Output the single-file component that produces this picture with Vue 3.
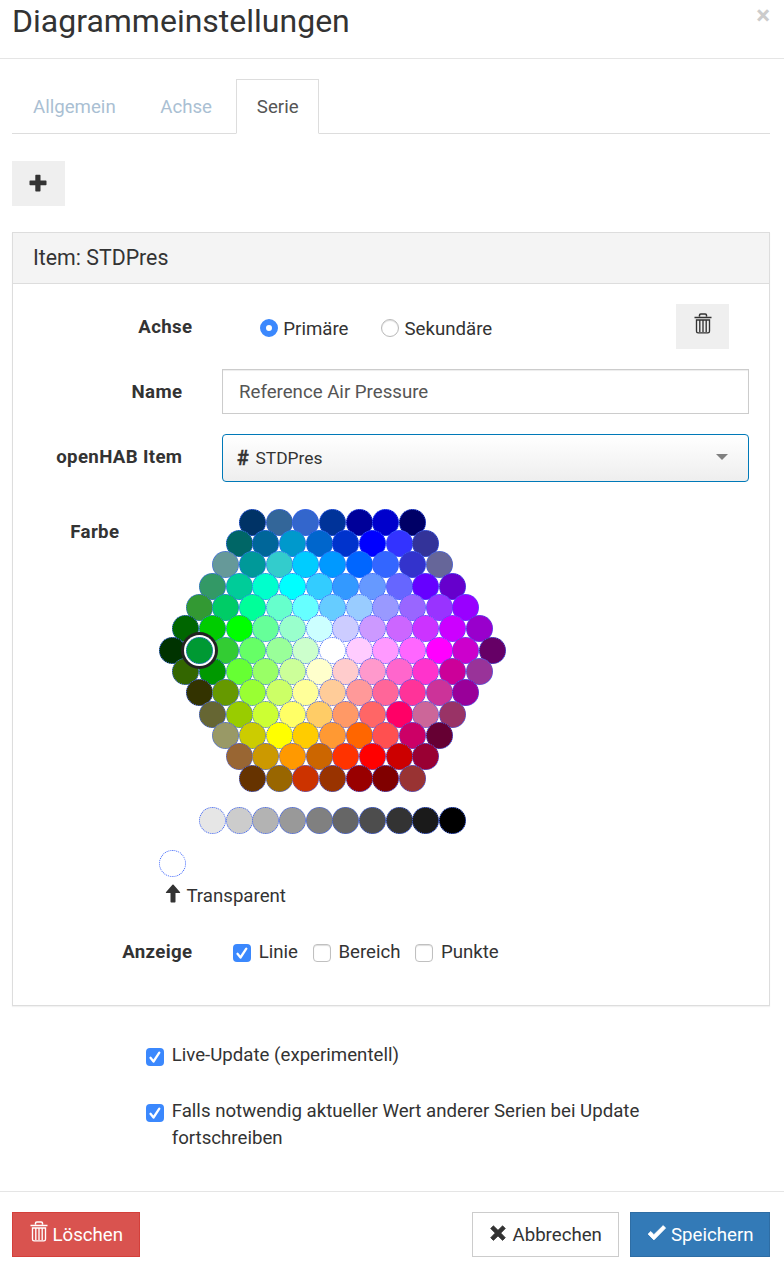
<script setup>
import { ref } from 'vue'

const hexRows = [
  '003366 336699 3366CC 003399 000099 0000CC 000066',
  '006666 006699 0099CC 0066CC 0033CC 0000FF 3333FF 333399',
  '669999 009999 33CCCC 00CCFF 0099FF 0066FF 3366FF 3333CC 666699',
  '339966 00CC99 00FFCC 00FFFF 33CCFF 3399FF 6699FF 6666FF 6600FF 6600CC',
  '339933 00CC66 00FF99 66FFCC 66FFFF 66CCFF 99CCFF 9999FF 9966FF 9933FF 9900FF',
  '006600 00CC00 00FF00 66FF99 99FFCC CCFFFF CCCCFF CC99FF CC66FF CC33FF CC00FF 9900CC',
  '003300 009933 33CC33 66FF66 99FF99 CCFFCC FFFFFF FFCCFF FF99FF FF66FF FF00FF CC00CC 660066',
  '336600 009900 66FF33 99FF66 CCFF99 FFFFCC FFCCCC FF99CC FF66CC FF33CC CC0099 993399',
  '333300 669900 99FF33 CCFF66 FFFF99 FFCC99 FF9999 FF6699 FF3399 CC3399 990099',
  '666633 99CC00 CCFF33 FFFF66 FFCC66 FF9966 FF6666 FF0066 CC6699 993366',
  '999966 CCCC00 FFFF00 FFCC00 FF9933 FF6600 FF5050 CC0066 660033',
  '996633 CC9900 FF9900 CC6600 FF3300 FF0000 CC0000 990033',
  '663300 996600 CC3300 993300 990000 800000 993333'
].map((r) => r.split(' ').map((c) => '#' + c))
const greys = ['e6', 'cc', 'b3', '99', '80', '66', '4d', '33', '1a', '00'].map((g) => '#' + g + g + g)
const selected = ref('#009933')
const displays = ref([
  { label: 'Linie', on: true },
  { label: 'Bereich', on: false },
  { label: 'Punkte', on: false }
])
</script>

<template>
  <div class="modal">
    <header class="head">
      <h1>Diagrammeinstellungen</h1>
      <span class="close">×</span>
    </header>

    <nav class="tabs">
      <a>Allgemein</a>
      <a>Achse</a>
      <a class="active">Serie</a>
    </nav>

    <button class="sq add">
      <svg width="18" height="18" viewBox="0 0 18 18"><path d="M7 .8h3.8q.7 0 .7.7v5h5.300q.7 0 .7.7v3.400q0 .7-.7.7h-5.300v5.500q0 .7-.7.7H7q-.7 0-.7-.7v-5.500H1.200q-.7 0-.7-.7V7.200q0-.7.7-.7h5.100v-5q0-.7.7-.7z" fill="#333" /></svg>
    </button>

    <section class="panel">
      <div class="panel-head">Item: STDPres</div>
      <div class="row axis">
        <b class="lbl wide">Achse</b>
        <span class="radio on"></span><span class="rtext">Primäre</span>
        <span class="radio second"></span><span class="rtext">Sekundäre</span>
        <button class="sq trash">
          <svg width="18" height="21" viewBox="0 0 18 21" fill="none" stroke="#333"><path d="M5.500 3.600V2.300Q5.500 1 6.800 1h4.400q1.300 0 1.300 1.300v1.300M.5 4.400h17" stroke-width="1.500" /><path d="M2.500 7h13v11.200q0 1.600-1.600 1.600H4.100q-1.600 0-1.600-1.600zM5.800 7v12M9 7v12M12.200 7v12" stroke-width="1.350" /></svg>
        </button>
      </div>
      <div class="row name">
        <b class="lbl">Name</b>
        <div class="input">Reference Air Pressure</div>
      </div>
      <div class="row item">
        <b class="lbl">openHAB Item</b>
        <div class="select"><b>#</b><span>STDPres</span><i class="caret"></i></div>
      </div>
      <div class="color">
        <b class="lbl">Farbe</b>
        <div class="picker">
          <div v-for="(r, i) in hexRows" :key="i" class="hexrow">
            <span v-for="c in r" :key="c" class="dot" :class="{ sel: c === selected }" :style="{ backgroundColor: c }"></span>
          </div>
          <div class="hexrow greys">
            <span v-for="c in greys" :key="c" class="dot" :style="{ backgroundColor: c }"></span>
          </div>
          <span class="dot clear"></span>
          <div class="transparent">
            <svg width="16" height="19" viewBox="0 0 16 19"><path d="M7.400.7q.6-.6 1.200 0l6.500 7.500q.4.800-.5.800H10.500v8.800q0 .7-.7.700H6.200q-.7 0-.7-.7V9H1.400Q.5 9 .9 8.200z" fill="#333" /></svg>
            <span>Transparent</span>
          </div>
        </div>
      </div>
      <div class="row display">
        <b class="lbl wide">Anzeige</b>
        <label v-for="d in displays" :key="d.label">
          <span class="check" :class="{ on: d.on }"><svg v-if="d.on" width="18" height="18" viewBox="0 0 18 18"><path d="M4.500 9.800l3 3.700 5.800-8.800" fill="none" stroke="#fff" stroke-width="2.300" stroke-linecap="round" stroke-linejoin="round" /></svg></span>
          <span>{{ d.label }}</span>
        </label>
      </div>
    </section>

    <div class="option live">
      <span class="check on"><svg width="18" height="18" viewBox="0 0 18 18"><path d="M4.500 9.800l3 3.700 5.800-8.800" fill="none" stroke="#fff" stroke-width="2.300" stroke-linecap="round" stroke-linejoin="round" /></svg></span>
      <span>Live-Update (experimentell)</span>
    </div>
    <div class="option carry">
      <span class="check on"><svg width="18" height="18" viewBox="0 0 18 18"><path d="M4.500 9.800l3 3.700 5.800-8.800" fill="none" stroke="#fff" stroke-width="2.300" stroke-linecap="round" stroke-linejoin="round" /></svg></span>
      <span>Falls notwendig aktueller Wert anderer Serien bei Update<br />fortschreiben</span>
    </div>

    <footer class="foot">
      <button class="btn del">
        <svg class="bin" width="18" height="21" viewBox="0 0 18 21" fill="none" stroke="#fff"><path d="M5.500 3.600V2.300Q5.500 1 6.800 1h4.400q1.300 0 1.300 1.300v1.300M.5 4.400h17" stroke-width="1.500" /><path d="M2.500 7h13v11.200q0 1.600-1.600 1.600H4.100q-1.600 0-1.600-1.600zM5.800 7v12M9 7v12M12.200 7v12" stroke-width="1.350" /></svg>
        <span>Löschen</span>
      </button>
      <button class="btn cancel">
        <svg width="18" height="18" viewBox="0 0 18 18"><path d="M4.400 1.800l4.600 4.500 4.600-4.500 2.700 2.700-4.500 4.600 4.500 4.600-2.700 2.700L9 11.900l-4.600 4.500-2.700-2.700 4.500-4.600-4.500-4.600z" fill="#333" stroke="#333" stroke-width=".8" stroke-linejoin="round" /></svg>
        <span>Abbrechen</span>
      </button>
      <button class="btn save">
        <svg width="20" height="18" viewBox="0 0 20 18"><path d="M16.200 1.600l2.400 2.500L6.900 15.900l-5.800-5.800 2.700-2.600 3.100 3.200z" fill="#fff" stroke="#fff" stroke-width=".8" stroke-linejoin="round" /></svg>
        <span>Speichern</span>
      </button>
    </footer>
  </div>
</template>

<style>
body { margin: 0; background: #fff; }
</style>

<style scoped>
* { box-sizing: border-box; }
.modal { width: 784px; height: 1270px; overflow: hidden; font: 18.67px/27px Roboto, "Liberation Sans", sans-serif; color: #333; background: #fff; }
svg { display: block; flex: none; }
button { font: inherit; color: inherit; margin: 0; }
b { font-weight: 700; }
.head { height: 59px; border-bottom: 1px solid #e5e5e5; padding: 0 12px; display: flex; justify-content: space-between; }
h1 { margin: 0; font-size: 32px; font-weight: 400; line-height: 42px; }
.close { font-size: 26px; font-weight: 700; line-height: 31px; color: #ccc; margin-right: 2px; }
.tabs { display: flex; height: 55px; margin: 20px 14px 0 12px; border-bottom: 1px solid #ddd; }
.tabs a { height: 55px; padding: 14px 20px 0; margin-right: 2.5px; border: 1px solid transparent; color: #aabfd3; }
.tabs .active { margin-left: .4px; padding-right: 19px; color: #555; background: #fff; border-color: #ddd; border-bottom-color: #fff; }
.sq { width: 53px; height: 45px; border: 0; background: #efefef; padding: 0; display: flex; justify-content: center; }
.add { margin: 27px 0 0 12px; padding-top: 12.500px; padding-right: 2px; }
.panel { margin: 26px 14px 0 12px; height: 774px; border: 1px solid #ddd; box-shadow: 0 1px 1px rgba(0, 0, 0, .05); }
.panel-head { height: 51px; background: #f4f4f4; border-bottom: 1px solid #ddd; padding-left: 20px; font-size: 21.33px; line-height: 50px; }
.row { display: flex; }
.lbl { width: 169.400px; margin-right: -.4px; text-align: right; flex: none; letter-spacing: .35px; }
.lbl.wide { width: 179.400px; }
.axis { margin-top: 20px; height: 45px; padding-right: 40px; }
.axis .lbl { padding-top: 10px; }
.radio { width: 18px; height: 18px; border-radius: 50%; border: 1px solid #b9b9b9; box-shadow: inset 0 1px 1px #ddd; margin: 15px 0 0 68px; flex: none; }
.radio.on { border: 6px solid #3b88fd; box-shadow: none; background: #fff; }
.radio.second { margin-left: 32.700px; }
.rtext { margin: 12px 0 0 5.300px; }
.trash { margin-left: auto; padding-top: 9px; padding-left: 1px; }
.name { margin-top: 20px; height: 45px; }
.name .lbl { padding-top: 10px; }
.input { margin-left: 40px; width: 527px; border: 1px solid #ccc; box-shadow: inset 0 1px 1px rgba(0, 0, 0, .075); padding: 9px 16px 7px; color: #555; }
.item { margin-top: 20px; height: 48px; }
.item .lbl { padding-top: 10px; }
.select { margin-left: 40px; width: 527px; border: 1px solid #0079b8; border-radius: 4px; background: linear-gradient(#fff, #eee); display: flex; align-items: center; padding: 0 20px 0 14px; font-size: 17.4px; }
.select b { font-size: 20px; width: 18.500px; -webkit-text-stroke: .3px #333; }
.caret { margin-left: auto; margin-top: -3px; border: 6px solid transparent; border-top-color: #808080; border-bottom: 0; }
.color { display: flex; margin-top: 26.75px; height: 420px; }
.color .lbl { width: 106.400px; padding-top: 10px; }
.picker { margin-left: 40px; width: 346.67px; }
.hexrow { display: flex; justify-content: center; height: 21.333px; }
.dot { width: 27px; height: 27px; flex: none; border-radius: 50%; border: 1px dotted #3b63fb; }
.hexrow .dot { margin-right: -.333px; }
.dot.sel { position: relative; z-index: 1; box-shadow: 0 0 0 2px #fff, 0 0 0 5px #222; }
.greys { margin-top: 21px; }
.clear { display: block; margin-top: 21.500px; }
.transparent { display: flex; align-items: flex-start; margin: 7px 0 0 6px; }
.transparent span { margin-left: 5.400px; margin-top: -1px; }
.display { margin-top: 10px; height: 27px; }
.display label { display: flex; }
.display label + label { margin-left: 14.700px; }
.display .lbl { margin-right: 40.600px; }
.check { width: 18px; height: 18px; margin: 5px 7.700px 0 0; border: 1px solid #c0c0c0; border-radius: 4px; box-shadow: inset 0 1px 1px #ddd; flex: none; }
.check.on { border: 0; background: #3b88fd; box-shadow: none; }
.option { display: flex; margin-left: 146px; }
.option .check { margin-top: 6px; }
.live { margin-top: 36px; }
.carry { margin-top: 29px; height: 54px; }
.foot { display: flex; margin-top: 39px; border-top: 1px solid #e5e5e5; padding: 20px 14px 0 12px; height: 79px; }
.btn { height: 45px; border: 1px solid #ccc; background: #fff; padding: 0 0 0 16.500px; display: flex; align-items: center; text-align: left; }
.btn span { margin-left: 5px; margin-top: 2px; }
.btn svg { margin-top: -4px; }
.del { width: 128px; background: #d9534f; border-color: #d43f3a; color: #fff; }
.del .bin { margin-top: -6px; }
.cancel { margin-left: auto; width: 147px; }
.save { margin-left: 11px; width: 140px; background: #337ab7; border-color: #2e6da4; color: #fff; }
.save span { margin-left: 4px; }
.cancel, .save { padding-left: 16px; }
.cancel span { margin-left: 5.500px; }
</style>
